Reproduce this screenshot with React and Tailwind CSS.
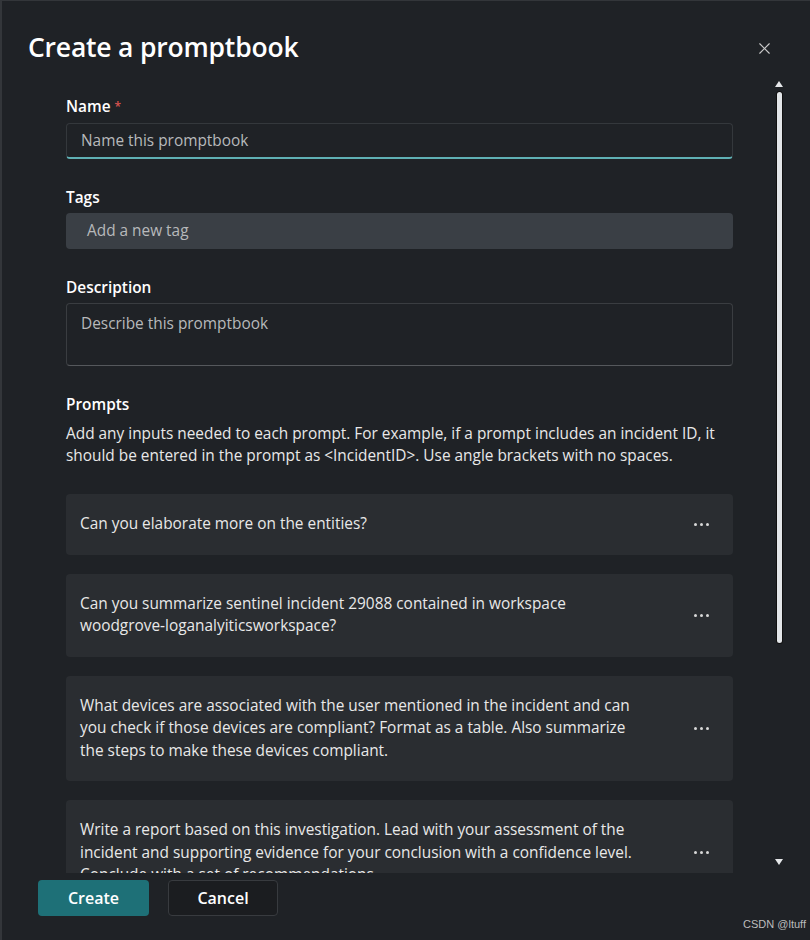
import { X } from "lucide-react";

const prompts = [
  "Can you elaborate more on the entities?",
  "Can you summarize sentinel incident 29088 contained in workspace woodgrove\u2011loganalyiticsworkspace?",
  "What devices are associated with the user mentioned in the incident and can you check if those devices are compliant? Format as a table. Also summarize the steps to make these devices compliant.",
  "Write a report based on this investigation. Lead with your assessment of the incident and supporting evidence for your conclusion with a confidence level. Conclude with a set of recommendations.",
];

function Dots() {
  return (
    <div className="flex gap-[3px] items-center">
      <span className="w-[3px] h-[3px] rounded-full bg-[#d8d8d8]" />
      <span className="w-[3px] h-[3px] rounded-full bg-[#d8d8d8]" />
      <span className="w-[3px] h-[3px] rounded-full bg-[#d8d8d8]" />
    </div>
  );
}

function PromptCard({ text }) {
  return (
    <div className="flex items-center bg-[#2a2d31] rounded-[4px] pl-[14px] pr-[24px] py-[19px]">
      <p className="w-[562px] text-[15.4px] leading-[22.5px] text-[#e8e8e8]">{text}</p>
      <div className="ml-auto">
        <Dots />
      </div>
    </div>
  );
}

export default function App() {
  return (
    <div
      className="w-[810px] h-[940px] bg-[#1f2226] text-white flex flex-col overflow-hidden border-l-2 border-t border-[#33363a]"
      style={{ fontFamily: '"Open Sans", "Noto Sans", sans-serif' }}
    >
      {/* header */}
      <div className="h-[80px] shrink-0 flex items-start pt-[28px] pl-[26px] pr-[36px]">
        <h1 className="text-[26.5px] leading-[36px] font-semibold tracking-[-0.2px]">Create a promptbook</h1>
        <button className="ml-auto mt-[10px] text-[#c9c9c9]">
          <X size={19} strokeWidth={1.4} />
        </button>
      </div>

      {/* scroll area */}
      <div className="flex-1 flex overflow-hidden">
        <div className="w-[667px] ml-[64px] pt-[16px] shrink-0">
          <label className="block text-[15.4px] leading-[20px] font-semibold">
            Name <span className="text-[#d9534f] text-[12px] align-top">*</span>
          </label>
          <div className="mt-[6px] h-[36px] rounded-[4px] border border-[#34383c] border-b-2 border-b-[#5fb0b4] flex items-center px-[14px] text-[15.4px] text-[#b7b9bb]">
            Name this promptbook
          </div>

          <label className="block mt-[29px] text-[15.4px] leading-[20px] font-semibold">Tags</label>
          <div className="mt-[5px] h-[36px] rounded-[4px] bg-[#3a3f45] flex items-center px-[21px] text-[15.4px] text-[#b7b9bb]">
            Add a new tag
          </div>

          <label className="block mt-[29px] text-[15.4px] leading-[20px] font-semibold">Description</label>
          <div className="mt-[5px] h-[63px] rounded-[4px] border border-[#3a3d41] border-b-[#55585c] px-[14px] pt-[8px] text-[15.4px] text-[#b7b9bb]">
            Describe this promptbook
          </div>

          <label className="block mt-[29px] text-[15.4px] leading-[20px] font-semibold">Prompts</label>
          <p className="mt-[8px] text-[15.4px] leading-[22px] text-[#e8e8e8]">
            Add any inputs needed to each prompt. For example, if a prompt includes an incident ID, it should be
            entered in the prompt as &lt;IncidentID&gt;. Use angle brackets with no spaces.
          </p>

          <div className="mt-[27px] flex flex-col gap-[19px]">
            {prompts.map((p, i) => (
              <PromptCard key={i} text={p} />
            ))}
          </div>
        </div>

        {/* scrollbar */}
        <div className="ml-auto mr-[21px] w-[20px] flex flex-col items-center pb-[8px]">
          <span className="w-0 h-0 border-l-[4px] border-r-[4px] border-b-[6px] border-l-transparent border-r-transparent border-b-[#e6e8ea]" />
          <div className="mt-[5px] w-[5px] h-[551px] rounded-full bg-[#e3e6e9] shadow-[0_0_0_1px_#111]" />
          <span className="mt-auto w-0 h-0 border-l-[4px] border-r-[4px] border-t-[6px] border-l-transparent border-r-transparent border-t-[#e6e8ea]" />
        </div>
      </div>

      {/* footer */}
      <div className="h-[67px] shrink-0 relative flex items-start pt-[7px] pl-[36px] gap-[19px]">
        <button className="w-[111px] h-[36px] rounded-[4px] bg-[#1e7077] text-[16px] font-semibold">Create</button>
        <button className="w-[110px] h-[36px] rounded-[4px] bg-[#1b1d20] border border-[#383b3f] text-[16px] font-semibold">
          Cancel
        </button>
        <span className="absolute right-[4px] bottom-[8px] text-[11px] text-[#bdbdbd]" style={{ fontFamily: '"Liberation Sans", sans-serif' }}>
          CSDN @ltuff
        </span>
      </div>
    </div>
  );
}
